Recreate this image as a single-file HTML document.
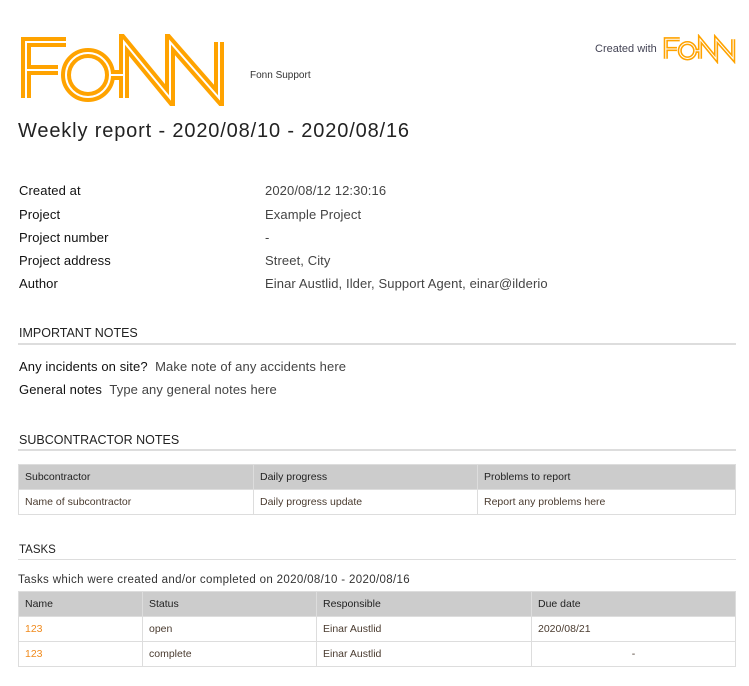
<!DOCTYPE html>
<html><head><meta charset="utf-8"><style>
body{margin:0;width:749px;height:686px;background:#fff;font-family:"Liberation Sans",sans-serif;color:#222;position:relative;overflow:hidden}
.a{position:absolute;white-space:nowrap}
.l{font-size:13px;color:#111;letter-spacing:0.1px}
.v{font-size:13px;color:#444;letter-spacing:0.1px}
.h{font-size:12.5px;color:#222;letter-spacing:0}
.hr{position:absolute;left:18px;width:718px;height:2px;background:#ddd}
table{position:absolute;left:18px;width:718px;border-collapse:collapse;font-size:10.5px;letter-spacing:0}
td,th{border:1px solid #ddd;padding:0 6px;text-align:left;font-weight:normal;height:24px}
th{background:#ccc;color:#222}
td{color:#4a3b2f}
.o{color:#f08a1c}
</style></head><body>
<svg class="a" style="left:18px;top:34px" width="212" height="72" viewBox="18 34 212 72">
<defs><path id="lg" d="M66 42H26V98M26 70H58M110 75H124M124 98V42L170 98V42L219 98V42"/></defs>
<g fill="none" stroke="#ffa300" stroke-width="10"><use href="#lg"/><circle cx="88" cy="75" r="22"/></g>
<g fill="none" stroke="#fff" stroke-width="2"><use href="#lg"/><circle cx="88" cy="75" r="22"/></g>
</svg>
<div class="a" style="left:250px;top:70px;font-size:10px;color:#333">Fonn Support</div>
<div class="a" style="left:595px;top:43px;font-size:11px;color:#445">Created with</div>
<svg class="a" style="left:663px;top:34px" width="74" height="30" viewBox="18 34 212 72">
<g fill="none" stroke="#ffa300" stroke-width="12"><use href="#lg"/><circle cx="88" cy="75" r="22"/></g>
<g fill="none" stroke="#fff" stroke-width="3"><use href="#lg"/><circle cx="88" cy="75" r="22"/></g>
</svg>
<div class="a" style="left:18px;top:120px;font-size:20px;color:#222;letter-spacing:0.85px">Weekly report - 2020/08/10 - 2020/08/16</div>
<div class="a l" style="left:19px;top:183px">Created at</div><div class="a v" style="left:265px;top:183px">2020/08/12 12:30:16</div>
<div class="a l" style="left:19px;top:207px">Project</div><div class="a v" style="left:265px;top:207px">Example Project</div>
<div class="a l" style="left:19px;top:230px">Project number</div><div class="a v" style="left:265px;top:230px">-</div>
<div class="a l" style="left:19px;top:253px">Project address</div><div class="a v" style="left:265px;top:253px">Street, City</div>
<div class="a l" style="left:19px;top:276px">Author</div><div class="a v" style="left:265px;top:276px">Einar Austlid, Ilder, Support Agent, einar@ilderio</div>
<div class="a h" style="left:19px;top:326px">IMPORTANT NOTES</div><div class="hr" style="top:343px"></div>
<div class="a l" style="left:19px;top:359px">Any incidents on site? <span style="color:#444">&nbsp;Make note of any accidents here</span></div>
<div class="a l" style="left:19px;top:382px">General notes <span style="color:#444">&nbsp;Type any general notes here</span></div>
<div class="a h" style="left:19px;top:433px">SUBCONTRACTOR NOTES</div><div class="hr" style="top:449px"></div>
<table style="top:464px"><tr><th style="width:222px">Subcontractor</th><th style="width:211px">Daily progress</th><th>Problems to report</th></tr>
<tr><td>Name of subcontractor</td><td>Daily progress update</td><td>Report any problems here</td></tr></table>
<div class="a h" style="left:19px;top:544px;font-size:11.5px">TASKS</div><div class="hr" style="top:559px;height:1px"></div>
<div class="a" style="left:18px;top:574px;font-size:11.5px;color:#333;letter-spacing:0.35px">Tasks which were created and/or completed on 2020/08/10 - 2020/08/16</div>
<table style="top:591px"><tr><th style="width:111px">Name</th><th style="width:161px">Status</th><th style="width:202px">Responsible</th><th>Due date</th></tr>
<tr><td class="o">123</td><td>open</td><td>Einar Austlid</td><td>2020/08/21</td></tr>
<tr><td class="o">123</td><td>complete</td><td>Einar Austlid</td><td style="text-align:center">-</td></tr></table>
</body></html>
